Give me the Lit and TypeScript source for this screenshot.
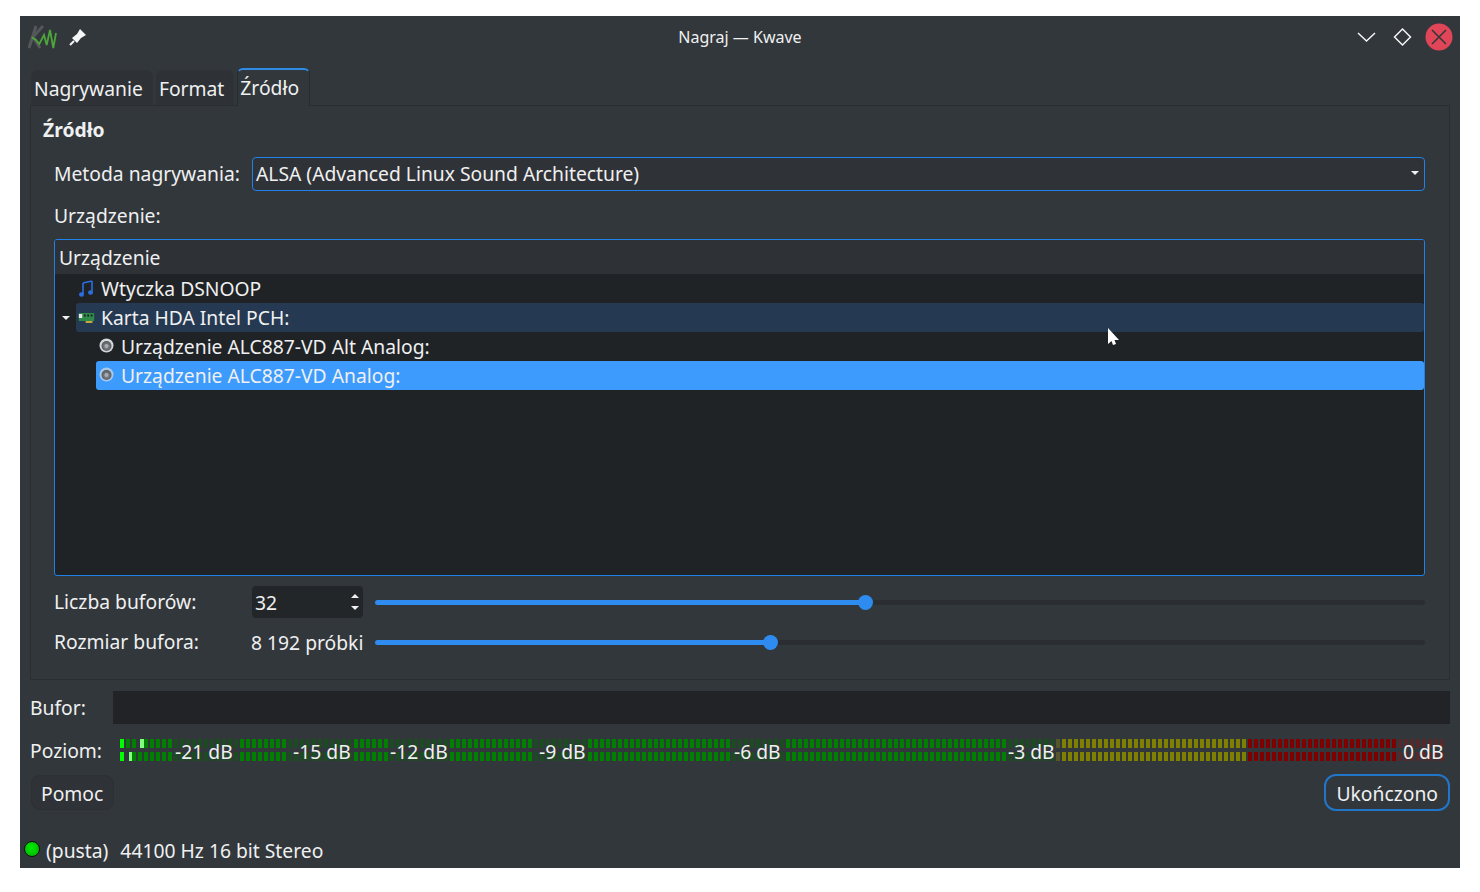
import { LitElement, html, css, svg } from "lit";
import { customElement } from "lit/decorators.js";

const METER_X0 = 120;
const SEG_PITCH = 6;
const SEG_COUNT = 221;

// bright ranges of the meter, everything between them sits behind a label
const LIT: [number, number][] = [
  [120, 172],
  [240, 287],
  [354, 387],
  [450, 534],
  [588, 731],
  [785, 1005],
  [1057, 1246],
  [1246, 1397],
];

const LABELS = [
  { text: "-21 dB", x: 175 },
  { text: "-15 dB", x: 293 },
  { text: "-12 dB", x: 390 },
  { text: "-9 dB", x: 539 },
  { text: "-6 dB", x: 734 },
  { text: "-3 dB", x: 1008 },
  { text: "0 dB", x: 1403 },
];

function segClass(x: number, row: number): string {
  if (x === 120) return "peak";
  if (row === 0 && x === 138) return "hot";
  if (row === 1 && x === 126) return "hot";
  const zone = x < 1055 ? "g" : x < 1246 ? "y" : "r";
  const lit = LIT.some(([a, b]) => x >= a && x < b);
  return zone + (lit ? "" : "-dim");
}

// the two peak markers don't sit on the regular segment grid
function segX(x: number, row: number): number {
  if (row === 0 && x === 138) return 140;
  if (row === 1 && x === 126) return 129;
  return x;
}

@customElement("app-root")
export class AppRoot extends LitElement {
  static styles = css`
    :host {
      display: block;
      height: 892px;
      box-sizing: border-box;
      padding: 16px 20px 24px;
      background: #ffffff;
      font-family: "Noto Sans", sans-serif;
      font-size: 19.3px;
      line-height: 27px;
      color: #eff0f1;
    }
    .window {
      height: 852px;
      background: #32373b;
      display: flex;
      flex-direction: column;
    }
    .titlebar {
      height: 42px;
      display: flex;
      align-items: center;
      padding: 0 7px 0 8px;
      position: relative;
      flex: none;
    }
    .titlebar svg {
      display: block;
    }
    .logo {
      margin-right: 10px;
    }
    .title {
      position: absolute;
      left: 0;
      right: 0;
      text-align: center;
      font-size: 16px;
    }
    .winbtns {
      margin-left: auto;
      display: flex;
      align-items: center;
      gap: 9px;
    }
    .tabs {
      display: flex;
      align-items: flex-end;
      gap: 3px;
      height: 47px;
      padding: 0 10px 0 11px;
      flex: none;
    }
    .tab {
      height: 35px;
      box-sizing: border-box;
      padding: 5px 10px 0 3px;
      background: #2e3236;
      border-radius: 6px 6px 0 0;
    }
    .tab.active {
      height: 38px;
      background: #32373b;
      border: 1px solid #282c2f;
      border-bottom: none;
      border-top: 2px solid #2e8be6;
      padding: 4px 10px 0 2px;
      margin-bottom: -1px;
      position: relative;
    }
    .panel {
      margin: 0 10px;
      height: 575px;
      box-sizing: border-box;
      border: 1px solid #2a2e32;
      padding: 10px 24px 0 12px;
      flex: none;
      display: flex;
      flex-direction: column;
    }
    .heading {
      font-weight: 700;
      height: 27px;
    }
    .group {
      padding-left: 11px;
      display: flex;
      flex-direction: column;
    }
    .row {
      display: flex;
      align-items: center;
    }
    .method {
      margin-top: 14px;
      height: 34px;
    }
    .method .label {
      width: 198px;
      flex: none;
      margin-bottom: 2px;
    }
    .combo {
      flex: 1;
      height: 34px;
      box-sizing: border-box;
      border: 1px solid #1f82ea;
      border-radius: 4px;
      background: #2f3337;
      padding: 0 0 2px 3px;
      display: flex;
      align-items: center;
      justify-content: space-between;
    }
    .arrow-down {
      width: 0;
      height: 0;
      border-left: 4px solid transparent;
      border-right: 4px solid transparent;
      border-top: 4px solid #eff0f1;
      margin-right: 5px;
    }
    .device-label {
      margin-top: 11px;
      height: 27px;
    }
    .tree {
      margin-top: 10px;
      height: 337px;
      box-sizing: border-box;
      border: 1px solid #1f82ea;
      border-radius: 3px;
      background: #202326;
      overflow: hidden;
    }
    .tree-head {
      height: 34px;
      background: #2e3236;
      padding-left: 4px;
      line-height: 35px;
    }
    .node {
      height: 29px;
      display: flex;
      align-items: center;
      line-height: 29px;
    }
    .node svg {
      flex: none;
    }
    .node.lvl0 {
      padding-left: 21px;
    }
    .node.lvl0 .ic {
      margin-right: 5px;
    }
    .node.lvl1 {
      margin-left: 41px;
      padding-left: 3px;
    }
    .node.lvl1 .ic {
      margin-right: 7px;
      margin-bottom: 3px;
    }
    .node.hover {
      margin-left: 21px;
      padding-left: 0;
      background: #253a52;
      border-radius: 3px;
      position: relative;
    }
    .node.hover .ic {
      margin-left: 2px;
      margin-right: 6px;
    }
    .node.selected {
      background: #3d9bfd;
      border-radius: 3px;
    }
    .twisty {
      position: absolute;
      left: -14px;
      top: 13px;
      width: 0;
      height: 0;
      border-left: 4px solid transparent;
      border-right: 4px solid transparent;
      border-top: 4px solid #eff0f1;
    }
    .pointer {
      position: absolute;
      left: 1107px;
      top: 327px;
    }
    .slider-row {
      height: 40px;
    }
    .slider-row.first {
      margin-top: 6px;
    }
    .slider-row .label {
      width: 198px;
      flex: none;
      margin-bottom: 2px;
    }
    .spin {
      width: 111px;
      height: 32px;
      box-sizing: border-box;
      background: #232629;
      border-radius: 4px;
      flex: none;
      padding: 0 3px;
      display: flex;
      align-items: center;
      justify-content: space-between;
    }
    .spin-arrows {
      display: flex;
      flex-direction: column;
      gap: 8px;
      margin-right: 1px;
    }
    .up {
      width: 0;
      height: 0;
      border-left: 4px solid transparent;
      border-right: 4px solid transparent;
      border-bottom: 4px solid #eff0f1;
    }
    .down {
      width: 0;
      height: 0;
      border-left: 4px solid transparent;
      border-right: 4px solid transparent;
      border-top: 4px solid #eff0f1;
    }
    .value {
      width: 112px;
      margin-left: -1px;
      flex: none;
      white-space: nowrap;
    }
    .track {
      flex: 1;
      margin-left: 12px;
      height: 5px;
      background: #2a2e32;
      border-radius: 3px;
      position: relative;
    }
    .fill {
      height: 5px;
      background: #2e8cf0;
      border-radius: 3px;
    }
    .thumb {
      position: absolute;
      top: -5px;
      width: 15px;
      height: 15px;
      margin-left: -7px;
      border-radius: 50%;
      background: #2e8cf0;
    }
    .bufor {
      margin-top: 10px;
      height: 35px;
      padding: 0 10px;
      flex: none;
    }
    .bufor .label {
      width: 83px;
      flex: none;
    }
    .bar {
      flex: 1;
      height: 33px;
      background: #212326;
    }
    .poziom {
      margin-top: 7px;
      height: 36px;
      padding-left: 10px;
      flex: none;
      position: relative;
    }
    .meter {
      position: absolute;
      left: 0;
      top: 0;
    }
    .db {
      position: absolute;
      top: 6px;
      white-space: nowrap;
    }
    .peak { fill: #00ff00; }
    .hot { fill: #80ff80; }
    .g { fill: #008000; }
    .g-dim { fill: #1d4a22; }
    .y { fill: #808000; }
    .y-dim { fill: #55562a; }
    .r { fill: #800000; }
    .r-dim { fill: #552a2c; }
    .buttons {
      margin-top: 6px;
      height: 37px;
      padding: 0 10px 0 11px;
      display: flex;
      justify-content: space-between;
      flex: none;
    }
    .btn {
      height: 35px;
      margin-top: 1px;
      box-sizing: border-box;
      padding: 2px 10px 0 9px;
      border-radius: 9px;
      background: #2f3337;
      border: 1px solid #2c3033;
      display: flex;
      align-items: center;
    }
    .btn.default {
      height: 37px;
      margin-top: 0;
      padding: 2px 10px 0;
      border: 2px solid #2176c9;
      border-radius: 12px;
      background: #32373b;
    }
    .status {
      margin-top: 26px;
      padding-left: 4px;
      height: 27px;
      display: flex;
      align-items: center;
      flex: none;
    }
    .led {
      width: 14px;
      height: 14px;
      border-radius: 50%;
      border: 1px solid #0a140a;
      background: radial-gradient(circle at 45% 40%, #00ee00, #00a800);
      margin-right: 6px;
      margin-bottom: 3px;
    }
    .status .state {
      margin-right: 12px;
    }
  `;

  private speaker(id: string, tint: string) {
    return html`<svg class="ic" width="15" height="15" viewBox="0 0 15 15">
      <defs>
        <radialGradient id=${id} cx="0.5" cy="0.55" r="0.6">
          <stop offset="0" stop-color="#8d9296"></stop>
          <stop offset="1" stop-color="#4c5155"></stop>
        </radialGradient>
      </defs>
      <circle cx="7.5" cy="7.5" r="7" fill=${tint}></circle>
      <circle cx="7.5" cy="8" r="5" fill="url(#${id})"></circle>
      <circle cx="7.5" cy="8" r="2" fill="#a9adb0"></circle>
    </svg>`;
  }

  private meter() {
    const rects = [];
    for (let i = 0; i < SEG_COUNT; i++) {
      const x = METER_X0 + i * SEG_PITCH;
      for (const row of [0, 1]) {
        rects.push(
          svg`<rect class=${segClass(x, row)} x=${segX(x, row) - 20} y=${row === 0 ? 7 : 20} width="4" height="9"></rect>`
        );
      }
    }
    return html`<svg class="meter" width="1440" height="36">${rects}</svg>`;
  }

  render() {
    return html`
      <div class="window">
        <div class="titlebar">
          <svg class="logo" width="30" height="26" viewBox="0 0 30 26">
            <path d="M8 2 L1 24 M5 13 L15 2 M5 13 L12 24" fill="none" stroke="#55585a" stroke-width="3"></path>
            <path d="M3.700 13.300 L8 16 L11.300 20 L16 11 L18.700 21 L22 6 L25.300 24 L28 9" fill="none" stroke="#4da63c" stroke-width="1.800"></path>
          </svg>
          <svg width="20" height="20" viewBox="0 0 20 20">
            <path d="M12 2 L18 8 L13 11 L9 16 L4 11 L9 7 Z" fill="#f5f6f6"></path>
            <path d="M6 14 L2 18" stroke="#f5f6f6" stroke-width="2"></path>
          </svg>
          <div class="title">Nagraj — Kwave</div>
          <div class="winbtns">
            <svg width="27" height="28" viewBox="0 0 27 28">
              <path d="M5 10 L13.500 18 L22 10" fill="none" stroke="#f5f6f6" stroke-width="1.500"></path>
            </svg>
            <svg width="27" height="28" viewBox="0 0 27 28">
              <path d="M13.500 6 L21.500 14 L13.500 22 L5.500 14 Z" fill="none" stroke="#f5f6f6" stroke-width="1.500"></path>
            </svg>
            <svg width="28" height="28" viewBox="0 0 28 28">
              <circle cx="14" cy="14" r="13.500" fill="#e04558"></circle>
              <path d="M7 7 L21 21 M21 7 L7 21" stroke="#31363b" stroke-width="1.500"></path>
            </svg>
          </div>
        </div>

        <div class="tabs">
          <div class="tab">Nagrywanie</div>
          <div class="tab">Format</div>
          <div class="tab active">Źródło</div>
        </div>

        <div class="panel">
          <div class="heading">Źródło</div>
          <div class="group">
            <div class="row method">
              <div class="label">Metoda nagrywania:</div>
              <div class="combo">
                <span>ALSA (Advanced Linux Sound Architecture)</span>
                <span class="arrow-down"></span>
              </div>
            </div>
            <div class="device-label">Urządzenie:</div>
            <div class="tree">
              <div class="tree-head">Urządzenie</div>
              <div class="node lvl0">
                <svg class="ic" width="20" height="20" viewBox="0 0 20 20">
                  <path d="M7 4 L7 15 M16 2 L16 13 M7 4 L16 2" fill="none" stroke="#2a6fe0" stroke-width="1.600"></path>
                  <ellipse cx="5.500" cy="15.500" rx="2.500" ry="2.200" fill="#2a6fe0"></ellipse>
                  <ellipse cx="14.500" cy="13.500" rx="2.500" ry="2.200" fill="#2a6fe0"></ellipse>
                </svg>
                Wtyczka DSNOOP
              </div>
              <div class="node lvl0 hover">
                <span class="twisty"></span>
                <svg class="ic" width="17" height="14" viewBox="0 0 20 14" preserveAspectRatio="none">
                  <rect x="1" y="2" width="18" height="8" fill="#2f8a4a"></rect>
                  <rect x="1" y="3" width="4" height="4" fill="#e6e8e6"></rect>
                  <rect x="7" y="3.500" width="2" height="2" fill="#1a1d1c"></rect>
                  <rect x="11" y="3.500" width="2" height="2" fill="#1a1d1c"></rect>
                  <rect x="15" y="3.500" width="2" height="2" fill="#1a1d1c"></rect>
                  <rect x="9" y="10" width="8" height="2" fill="#c9a63a"></rect>
                </svg>
                Karta HDA Intel PCH:
              </div>
              <div class="node lvl1">${this.speaker("spk-a", "#d4d6d8")}Urządzenie ALC887-VD Alt Analog:</div>
              <div class="node lvl1 selected">${this.speaker("spk-b", "#a9c8e8")}Urządzenie ALC887-VD Analog:</div>
            </div>
            <div class="row slider-row first">
              <div class="label">Liczba buforów:</div>
              <div class="spin">
                <span>32</span>
                <span class="spin-arrows"><span class="up"></span><span class="down"></span></span>
              </div>
              <div class="track">
                <div class="fill" style="width: 46.700%"></div>
                <div class="thumb" style="left: 46.700%"></div>
              </div>
            </div>
            <div class="row slider-row">
              <div class="label">Rozmiar bufora:</div>
              <div class="value">8 192 próbki</div>
              <div class="track">
                <div class="fill" style="width: 37.600%"></div>
                <div class="thumb" style="left: 37.600%"></div>
              </div>
            </div>
          </div>
        </div>

        <div class="row bufor">
          <div class="label">Bufor:</div>
          <div class="bar"></div>
        </div>
        <div class="row poziom">
          ${this.meter()}
          <span>Poziom:</span>
          ${LABELS.map((l) => html`<span class="db" style="left: ${l.x - 20}px">${l.text}</span>`)}
        </div>
        <div class="buttons">
          <div class="btn">Pomoc</div>
          <div class="btn default">Ukończono</div>
        </div>
        <div class="status">
          <span class="led"></span>
          <span class="state">(pusta)</span>
          <span>44100 Hz 16 bit Stereo</span>
        </div>
      </div>
      <svg class="pointer" width="14" height="22" viewBox="0 0 14 22">
        <path d="M1 1 L1 17 L4.500 14 L6 18 L9 17 L7.500 13 L12 13 Z" fill="#ffffff"></path>
      </svg>
    `;
  }
}
